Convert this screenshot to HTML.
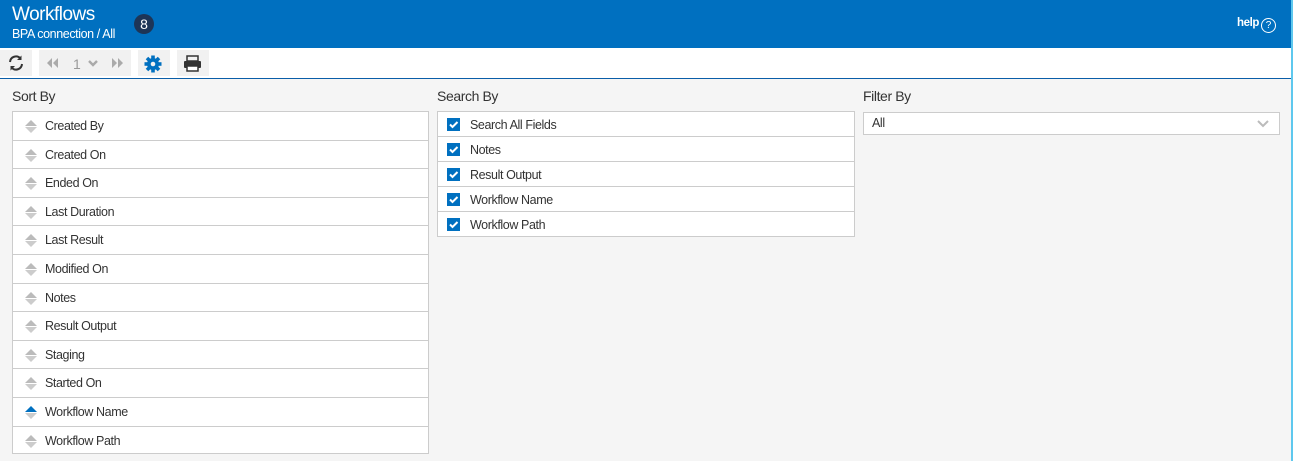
<!DOCTYPE html>
<html><head><meta charset="utf-8"><style>
*{box-sizing:border-box;margin:0;padding:0}
body{width:1293px;height:461px;overflow:hidden;background:#f5f5f5;font-family:"Liberation Sans",sans-serif;color:#333;position:relative;letter-spacing:-0.4px}
.hdr{position:absolute;left:0;top:0;width:1293px;height:48px;background:#0070c0;color:#fff}
.t{position:absolute;left:12px;top:4px;font-size:19px;letter-spacing:-0.5px}
.s{position:absolute;left:12px;top:27px;font-size:12.5px}
.b{position:absolute;left:134px;top:14px;width:20px;height:20px;border-radius:50%;background:#1d3557;color:#fff;font-size:14px;text-align:center;line-height:20px;letter-spacing:0}
.help{position:absolute;left:1237px;top:17px;font-size:11.5px;font-weight:bold}
.q{position:absolute;left:1261px;top:18px;width:15px;height:15px;border:1px solid #fff;border-radius:50%;font-size:10px;text-align:center;line-height:13px;letter-spacing:0}
.tb{position:absolute;left:0;top:48px;width:1293px;height:31px;background:#fff;border-bottom:1px solid #0a5ea8}
.btn{position:absolute;top:2px;height:26px;background:#f1f1f1}
.edge{position:absolute;right:0;top:0;width:2px;height:461px;background:#5ec8ee}
h3{position:absolute;font-size:14px;font-weight:normal;top:88px;color:#333}
.list{position:absolute;background:#fff;border:1px solid #ccc}
.row{border-bottom:1px solid #ccc;font-size:12.5px;position:relative;color:#333}
.row:last-child{border-bottom:none}
.sr{height:28.6px;line-height:28px;padding-left:32px}
.up{position:absolute;left:12px;top:8px;border-left:6px solid transparent;border-right:6px solid transparent;border-bottom:6px solid #bbb}
.dn{position:absolute;left:12px;top:15px;border-left:6px solid transparent;border-right:6px solid transparent;border-top:6px solid #ccc}
.cr{height:25px;line-height:26px;padding-left:32px}
.cb{position:absolute;left:9px;top:6px;width:13px;height:13px;background:#0070c0}
.sel{position:absolute;left:863px;top:112px;width:417px;height:23px;background:#fff;border:1px solid #ccc;font-size:12.5px;line-height:21px;padding-left:8px}
</style></head><body>
<div class="hdr"><div class="t">Workflows</div><div class="s">BPA connection / All</div><div class="b">8</div><div class="help">help</div><div class="q">?</div></div>
<div class="tb">
<div class="btn" style="left:0;width:32px"><svg width="32" height="26" viewBox="0 0 32 26"><path d="M10 12a6 6 0 0 1 10.5-3.5M22 14a6 6 0 0 1-10.5 3.5" stroke="#333" stroke-width="2" fill="none"/><path d="M21.5 5.5v4.5h-4.5zM10.5 20.5v-4.5h4.5z" fill="#333"/></svg></div>
<div class="btn" style="left:39px;width:92px"><svg width="92" height="26"><path d="M8 13l5-5v10zM14 13l5-5v10z" fill="#aaa"/><text x="34" y="19" font-size="14" fill="#999" font-family="Liberation Sans">1</text><path d="M50 11l4 4 4-4" stroke="#aaa" stroke-width="2.4" fill="none"/><path d="M84 13l-5-5v10zM78 13l-5-5v10z" fill="#aaa"/></svg></div>
<div class="btn" style="left:138px;width:32px"><svg width="32" height="26" viewBox="0 0 32 26"><g transform="translate(15 14)" fill="#0070c0"><circle r="6"/><rect x="-1.8" y="-8.5" width="3.6" height="17"/><rect x="-1.8" y="-8.5" width="3.6" height="17" transform="rotate(45)"/><rect x="-1.8" y="-8.5" width="3.6" height="17" transform="rotate(90)"/><rect x="-1.8" y="-8.5" width="3.6" height="17" transform="rotate(135)"/><circle r="2.3" fill="#f1f1f1"/></g></svg></div>
<div class="btn" style="left:177px;width:32px"><svg width="32" height="26"><rect x="10" y="6" width="11" height="5" fill="none" stroke="#333" stroke-width="1.5"/><rect x="7" y="11" width="17" height="7" rx="1" fill="#333"/><rect x="10" y="16" width="11" height="5" fill="#fff" stroke="#333" stroke-width="1.5"/></svg></div>
</div>
<h3 style="left:12px">Sort By</h3><h3 style="left:437px">Search By</h3><h3 style="left:863px">Filter By</h3>
<div class="list" style="left:12px;top:111px;width:417px;height:343px">
<div class="row sr"><i class="up"></i><i class="dn"></i>Created By</div>
<div class="row sr"><i class="up"></i><i class="dn"></i>Created On</div>
<div class="row sr"><i class="up"></i><i class="dn"></i>Ended On</div>
<div class="row sr"><i class="up"></i><i class="dn"></i>Last Duration</div>
<div class="row sr"><i class="up"></i><i class="dn"></i>Last Result</div>
<div class="row sr"><i class="up"></i><i class="dn"></i>Modified On</div>
<div class="row sr"><i class="up"></i><i class="dn"></i>Notes</div>
<div class="row sr"><i class="up"></i><i class="dn"></i>Result Output</div>
<div class="row sr"><i class="up"></i><i class="dn"></i>Staging</div>
<div class="row sr"><i class="up"></i><i class="dn"></i>Started On</div>
<div class="row sr"><i class="up" style="border-bottom-color:#0070c0"></i><i class="dn"></i>Workflow Name</div>
<div class="row sr"><i class="up"></i><i class="dn"></i>Workflow Path</div>
</div>
<div class="list" style="left:437px;top:111px;width:418px;height:126px">
<div class="row cr"><svg class="cb" viewBox="0 0 13 13"><path d="M3 6.5l2.5 2.5 5-5" stroke="#fff" stroke-width="2" fill="none"/></svg>Search All Fields</div>
<div class="row cr"><svg class="cb" viewBox="0 0 13 13"><path d="M3 6.5l2.5 2.5 5-5" stroke="#fff" stroke-width="2" fill="none"/></svg>Notes</div>
<div class="row cr"><svg class="cb" viewBox="0 0 13 13"><path d="M3 6.5l2.5 2.5 5-5" stroke="#fff" stroke-width="2" fill="none"/></svg>Result Output</div>
<div class="row cr"><svg class="cb" viewBox="0 0 13 13"><path d="M3 6.5l2.5 2.5 5-5" stroke="#fff" stroke-width="2" fill="none"/></svg>Workflow Name</div>
<div class="row cr"><svg class="cb" viewBox="0 0 13 13"><path d="M3 6.5l2.5 2.5 5-5" stroke="#fff" stroke-width="2" fill="none"/></svg>Workflow Path</div>
</div>
<div class="sel">All<svg style="position:absolute;right:10px;top:7px" width="12" height="8"><path d="M1 1l5 5 5-5" stroke="#bbb" stroke-width="2" fill="none"/></svg></div>
<div class="edge"></div>
</body></html>
